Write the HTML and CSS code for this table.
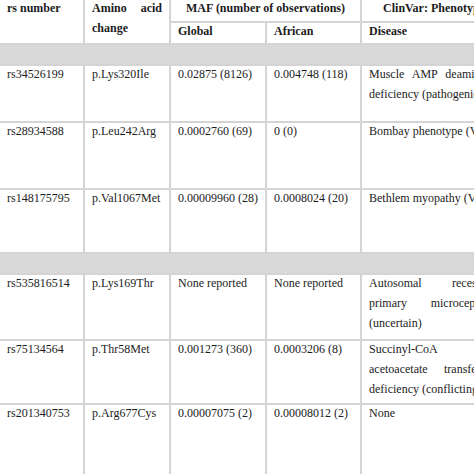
FILE: index.html
```html
<!DOCTYPE html>
<html>
<head>
<meta charset="utf-8">
<link rel="stylesheet" href="styles.css">
</head>
<body>
<div class="page">
<table class="grid">
  <colgroup>
    <col class="w1"><col class="w2"><col class="w3"><col class="w4"><col class="w5">
  </colgroup>
  <thead>
    <tr class="h1">
      <th rowspan="2"><div class="c">rs number</div></th>
      <th rowspan="2"><div class="c just">Amino acid change</div></th>
      <th colspan="2" class="center"><div class="c">MAF (number of observations)</div></th>
      <th class="clin"><div class="c">ClinVar: Phenotype</div></th>
    </tr>
    <tr class="h2">
      <th><div class="c">Global</div></th>
      <th><div class="c">African</div></th>
      <th><div class="c">Disease</div></th>
    </tr>
  </thead>
  <tbody>
    <tr class="band b1"><td colspan="5"></td></tr>
    <tr class="r1">
      <td><div class="c">rs34526199</div></td>
      <td><div class="c">p.Lys320Ile</div></td>
      <td><div class="c">0.02875 (8126)</div></td>
      <td><div class="c">0.004748 (118)</div></td>
      <td><div class="c just">Muscle AMP deaminase deficiency (pathogenic)</div></td>
    </tr>
    <tr class="r2">
      <td><div class="c">rs28934588</div></td>
      <td><div class="c">p.Leu242Arg</div></td>
      <td><div class="c">0.0002760 (69)</div></td>
      <td><div class="c">0 (0)</div></td>
      <td><div class="c nowrap">Bombay phenotype (VUS)</div></td>
    </tr>
    <tr class="r3">
      <td><div class="c">rs148175795</div></td>
      <td><div class="c">p.Val1067Met</div></td>
      <td><div class="c">0.00009960 (28)</div></td>
      <td><div class="c">0.0008024 (20)</div></td>
      <td><div class="c nowrap">Bethlem myopathy (VUS)</div></td>
    </tr>
    <tr class="band b2"><td colspan="5"></td></tr>
    <tr class="r4">
      <td><div class="c">rs535816514</div></td>
      <td><div class="c">p.Lys169Thr</div></td>
      <td><div class="c">None reported</div></td>
      <td><div class="c">None reported</div></td>
      <td><div class="c just">Autosomal recessive primary microcephaly (uncertain)</div></td>
    </tr>
    <tr class="r5">
      <td><div class="c">rs75134564</div></td>
      <td><div class="c">p.Thr58Met</div></td>
      <td><div class="c">0.001273 (360)</div></td>
      <td><div class="c">0.0003206 (8)</div></td>
      <td><div class="c just">Succinyl-CoA acetoacetate transferase deficiency (conflicting)</div></td>
    </tr>
    <tr class="r6">
      <td><div class="c">rs201340753</div></td>
      <td><div class="c">p.Arg677Cys</div></td>
      <td><div class="c">0.00007075 (2)</div></td>
      <td><div class="c">0.00008012 (2)</div></td>
      <td><div class="c just">None</div></td>
    </tr>
  </tbody>
</table>
</div>
</body>
</html>
```

FILE: styles.css
```css
html, body {
  margin: 0;
  padding: 0;
  background: #ffffff;
  overflow: hidden;
}
.page {
  width: 474px;
  height: 474px;
  overflow: hidden;
}
.grid {
  border-collapse: collapse;
  table-layout: fixed;
  width: 505px;
  margin-top: -2px;
  margin-left: -2px;
  font-family: "Liberation Serif", "Times New Roman", serif;
  font-size: 12px;
  color: #1c1c1c;
}
.w1 { width: 85px; }
.w2 { width: 86px; }
.w3 { width: 96px; }
.w4 { width: 95px; }
.w5 { width: 143px; }
th, td {
  border: 2px solid #d4d4d4;
  padding: 0 7px 0 7px;
  vertical-align: top;
  text-align: left;
  line-height: 20.4px;
  overflow: hidden;
}
th { font-weight: bold; }
th:first-child, td:first-child { padding-left: 7px; }
.c { margin-top: -2px; }
.just { text-align: justify; }
.nowrap { white-space: nowrap; }
.center { text-align: center; }
.clin { text-align: center; padding-left: 10px; white-space: nowrap; }
.h1 { height: 23px; }
.h2 { height: 21.5px; }
.band td { background: #d9d9d9; }
.b1 { height: 21.5px; }
.b2 { height: 21px; }
.r1 { height: 56.5px; }
.r2 { height: 67px; }
.r3 { height: 64px; }
.r4 { height: 66px; }
.r5 { height: 64px; }
.r6 { height: 90px; }
```
